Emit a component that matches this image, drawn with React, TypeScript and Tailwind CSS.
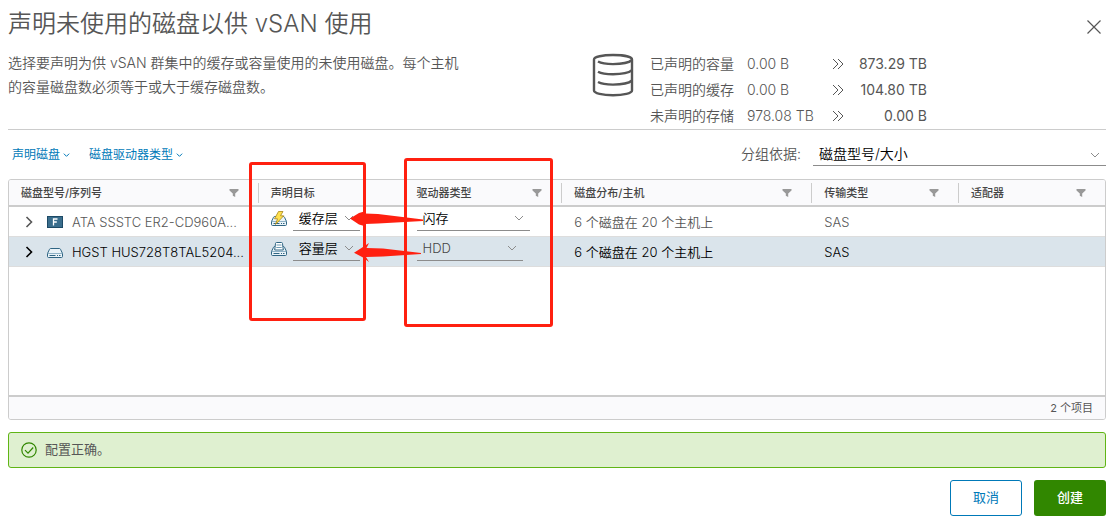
import React from "react";

const sans = "font-[Inter,'Noto_Sans_CJK_SC',sans-serif]";

function Chevron({ className = "" }: { className?: string }) {
  return (
    <svg viewBox="0 0 10 6" className={className} fill="none" stroke="currentColor" aria-hidden="true">
      <path d="M1 1l4 4 4-4" vectorEffect="non-scaling-stroke" />
    </svg>
  );
}

function FilterIcon() {
  return (
    <svg viewBox="0 0 10 8" className="h-2 w-2.5" fill="#999" aria-hidden="true">
      <path d="M.5 0h9v1.400L6.200 4.400V8L3.800 6.800V4.400L.5 1.400z" />
    </svg>
  );
}

function DatabaseIcon() {
  return (
    <svg viewBox="0 0 42 44" className="h-11 w-[42px]" fill="none" stroke="#565656" strokeWidth="2.400" aria-hidden="true">
      <path d="M2 6.500C2 3.800 10.500 2 21 2s19 1.800 19 4.500v31c0 2.700-8.500 4.800-19 4.800S2 40.200 2 37.500z" />
      <path d="M2 6.500c0 2.700 8.500 4.600 19 4.600s19-1.900 19-4.600" strokeWidth="1.200" stroke="none" />
      <path d="M6 8.500c3 1.700 8.500 2.600 15 2.600 8.500 0 16-1.500 19-4.100M6 18.700c3 1.700 8.500 2.600 15 2.600 8.500 0 16-1.500 19-4.100M6 29c3 1.700 8.500 2.600 15 2.600 8.500 0 16-1.500 19-4.100" />
    </svg>
  );
}

function FlashIcon() {
  return (
    <svg viewBox="0 0 16 12" className="h-3 w-4 shrink-0" aria-hidden="true">
      <rect x=".5" y=".5" width="15" height="11" fill="#3a6d8c" stroke="#1d4a66" />
      <path d="M6.500 9.500V3h4M6.500 6h3.300" fill="none" stroke="#fff" strokeWidth="1.300" />
    </svg>
  );
}

function DriveBody() {
  return (
    <>
      <path d="M3.600 5.500h8.800c.5 0 .9.300 1.100.8l2 4.200v3c0 .6-.4 1-1 1h-13c-.6 0-1-.4-1-1v-3l2-4.200c.2-.5.600-.8 1.100-.8z" fill="#eaf3f8" stroke="#2f6583" />
      <path d="M1 10.500h14" stroke="#8fb2c6" />
      <path d="M2.500 12.500h6M10 12.500h1M12 12.500h1.500" stroke="#2f6583" />
    </>
  );
}

function DriveIcon() {
  return (
    <svg viewBox="0 3 16 12" className="h-3 w-4 shrink-0" fill="none" aria-hidden="true">
      <DriveBody />
    </svg>
  );
}

function CacheTierIcon() {
  return (
    <svg viewBox="0 0 16 16" className="size-4 shrink-0" fill="none" aria-hidden="true">
      <DriveBody />
      <path d="M7.500.5h4.500L9.500 4.800h3.200L4.500 13.500l2-5.700H3.500z" fill="#ffe14d" stroke="#a8861a" strokeWidth=".8" />
    </svg>
  );
}

function CapacityTierIcon() {
  return (
    <svg viewBox="0 0 16 16" className="size-4 shrink-0" fill="none" aria-hidden="true">
      <DriveBody />
      <path d="M4.500 2.500c0-.6.400-1 1-1h5c.6 0 1 .4 1 1l.8 6.500H3.700z" fill="#fff" stroke="#2f6583" />
      <path d="M5.500 4h5M5.300 6.500h5.400" stroke="#6d9ab3" />
    </svg>
  );
}

function LineSelect({ label, value, width, tone }: { label: string; value: string; width: string; tone: string }) {
  return (
    <span className={`relative inline-flex h-6 border-b border-[#8c8c8c] ${width}`}>
      <select aria-label={label} defaultValue={value} className={`w-full appearance-none bg-transparent pb-px pl-1.5 text-[13px] leading-5 outline-none ${tone}`}>
        <option>{value}</option>
      </select>
      <Chevron className="pointer-events-none absolute top-2 right-1.5 h-1.5 w-2.5 text-[#8c8c8c]" />
    </span>
  );
}

const stats = [
  { label: "已声明的容量", now: "0.00 B", next: "873.29 TB" },
  { label: "已声明的缓存", now: "0.00 B", next: "104.80 TB" },
  { label: "未声明的存储", now: "978.08 TB", next: "0.00 B" },
];

const columns = [
  { name: "磁盘型号/序列号", width: "w-[22.7%]", filter: true },
  { name: "声明目标", width: "w-[13.3%]", filter: false },
  { name: "驱动器类型", width: "w-[14.4%]", filter: true },
  { name: "磁盘分布/主机", width: "w-[22.8%]", filter: true },
  { name: "传输类型", width: "w-[13.4%]", filter: true },
  { name: "适配器", width: "w-[13.4%]", filter: true },
];

const disks = [
  {
    model: "ATA SSSTC ER2-CD960A...",
    icon: <FlashIcon />,
    tierIcon: <CacheTierIcon />,
    tier: "缓存层",
    type: "闪存",
    typeWidth: "w-[113px]",
    typeTone: "text-black",
    row: "text-[#565656]",
  },
  {
    model: "HGST HUS728T8TAL5204...",
    icon: <DriveIcon />,
    tierIcon: <CapacityTierIcon />,
    tier: "容量层",
    type: "HDD",
    typeWidth: "w-[106px]",
    typeTone: "text-[#454545]",
    row: "bg-[#dae4eb] text-black",
  },
];

function DiskTable() {
  return (
    <section className="flex h-[241px] flex-col overflow-hidden rounded-[3px] border border-[#ccc]">
      <table className="w-full table-fixed border-collapse text-left">
        <thead>
          <tr className="h-[26px] border-b-2 border-[#ccc] bg-[#fafafc]">
            {columns.map((c, i) => (
              <th key={c.name} className={`p-0 text-[11px] font-medium text-[#454545] ${c.width}`}>
                <div className={`flex h-5 items-center justify-between pt-px pr-[19px] pl-3 ${i > 0 ? "border-l border-[#ccc]" : ""}`}>
                  {c.name}
                  {c.filter && (
                    <button aria-label={`筛选${c.name}`}>
                      <FilterIcon />
                    </button>
                  )}
                </div>
              </th>
            ))}
          </tr>
        </thead>
        <tbody>
          {disks.map((d) => (
            <tr key={d.model} className={`h-[30px] border-b border-[#ddd] text-[13px] leading-5 font-[350] ${d.row}`}>
              <td className="px-0 pt-0.5 pb-0">
                <div className="flex items-center pl-4">
                  <button aria-label="展开" className="mr-3.5">
                    <svg viewBox="0 0 8 12" className="h-3 w-2" fill="none" stroke="currentColor" strokeWidth="1.600" aria-hidden="true">
                      <path d="M1.500 1l5 5-5 5" />
                    </svg>
                  </button>
                  {d.icon}
                  <span className="ml-[9px] font-light whitespace-nowrap">{d.model}</span>
                </div>
              </td>
              <td className="p-0 align-top">
                <div className="flex pl-[13px]">
                  <span className="mr-1.5 pt-1">{d.tierIcon}</span>
                  <LineSelect label="声明目标" value={d.tier} width="w-[67px]" tone="text-black" />
                </div>
              </td>
              <td className="p-0 align-top">
                <div className="flex pl-[13px]">
                  <LineSelect label="驱动器类型" value={d.type} width={d.typeWidth} tone={d.typeTone} />
                </div>
              </td>
              <td className="pt-0.5 pr-0 pb-0 pl-[13px]">6 个磁盘在 20 个主机上</td>
              <td className="pt-0.5 pr-0 pb-0 pl-[13px]">SAS</td>
              <td className="p-0"></td>
            </tr>
          ))}
        </tbody>
      </table>
      <footer className="mt-auto flex h-6 items-center justify-end border-t-2 border-[#ccc] bg-[#fafafc] pr-3 text-[11px] text-[#565656]">
        2 个项目
      </footer>
    </section>
  );
}

function Annotations() {
  return (
    <div className="pointer-events-none" aria-hidden="true">
      <div className="absolute top-[162px] left-[249px] h-[159px] w-[117px] rounded-[3px] border-3 border-[#ff2010]" />
      <div className="absolute top-[158px] left-[404px] h-[169px] w-[149px] rounded-[3px] border-3 border-[#ff2010]" />
      <svg viewBox="0 0 80 56" className="absolute top-[208px] left-[346px] h-14 w-20" fill="#ff2010">
        <path d="M4 10.500L13 5l7-2-1 2.500L32 6l45 5.500V13l-45 2.500-13 .5 1 2.500-7-2z" />
        <path d="M8 44.700L17 39l6-4-2.500 5L37 40.500l38 4.500v1l-38 2.500-17 .5 3 5-6-4.500z" />
      </svg>
    </div>
  );
}

export default function App() {
  return (
    <main role="dialog" aria-labelledby="title" className={`relative bg-white px-2 pr-[9px] text-[#565656] ${sans}`}>
      <header className="flex h-[51px] items-start justify-between">
        <h1 id="title" className="pt-1 text-[24px] leading-10 font-[350]">声明未使用的磁盘以供 vSAN 使用</h1>
        <button aria-label="关闭" className="mt-[19px] mr-1">
          <svg viewBox="0 0 16 16" className="size-4" stroke="#565656" strokeWidth="1.200" aria-hidden="true">
            <path d="M1.500 1.500l13 13M14.500 1.500l-13 13" />
          </svg>
        </button>
      </header>

      <div className="grid grid-cols-[584fr_514fr] border-b border-[#ccc]">
        <p className="max-w-[460px] text-[14px] leading-6 font-[350]">
          选择要声明为供 vSAN 群集中的缓存或容量使用的未使用磁盘。每个主机的容量磁盘数必须等于或大于缓存磁盘数。
        </p>
        <div className="flex items-start">
          <span className="mt-0.5">
            <DatabaseIcon />
          </span>
          <table className="ml-4 w-[277px] table-fixed text-left text-[14px] leading-[26px]">
            <tbody>
              {stats.map((s) => (
                <tr key={s.label}>
                  <th className="w-[97px] p-0 font-[350]">{s.label}</th>
                  <td className="w-[85px] p-0 font-[350] whitespace-nowrap">{s.now}</td>
                  <td className="w-5 p-0">
                    <svg viewBox="0 0 12 12" className="size-3" fill="none" stroke="#565656" aria-hidden="true">
                      <path d="M1 1l5 5-5 5M6 1l5 5-5 5" />
                    </svg>
                  </td>
                  <td className="p-0 text-right whitespace-nowrap">{s.next}</td>
                </tr>
              ))}
            </tbody>
          </table>
        </div>
      </div>

      <div className="flex h-[49px] items-center justify-between">
        <div className="flex gap-[19px] pl-1 text-[12px] text-[#0079b8]">
          <button className="flex items-center gap-[3px]">
            声明磁盘
            <Chevron className="h-1 w-[7px]" />
          </button>
          <button className="flex items-center gap-[3px]">
            磁盘驱动器类型
            <Chevron className="h-1 w-[7px]" />
          </button>
        </div>
        <div className="flex items-center pb-0.5 text-[14px] font-[350]">
          <label htmlFor="group" className="mr-3">分组依据:</label>
          <span className="relative flex h-6 w-[293px] border-b border-[#8c8c8c]">
            <select id="group" className="w-full appearance-none bg-transparent pl-1.5 text-[14px] text-black outline-none">
              <option>磁盘型号/大小</option>
            </select>
            <Chevron className="pointer-events-none absolute top-2.5 right-1.5 h-1.5 w-2.5 text-[#8c8c8c]" />
          </span>
        </div>
      </div>

      <DiskTable />

      <div role="status" className="mt-3 flex h-9 items-center gap-2 rounded-[3px] border border-[#60b515] bg-[#dff0d0] pl-3 text-[13px]">
        <svg viewBox="0 0 16 16" className="size-4" fill="none" stroke="#318700" strokeWidth="1.200" aria-hidden="true">
          <circle cx="8" cy="8" r="7.200" />
          <path d="M4 8.200l3 3 5.200-5.700" />
        </svg>
        配置正确。
      </div>

      <div className="mt-3 flex justify-end gap-3 text-[13px]">
        <button className="h-9 w-[72px] rounded-[3px] border border-[#0079b8] text-[#0079b8]">取消</button>
        <button className="h-9 w-[72px] rounded-[3px] bg-[#318700] font-medium text-white">创建</button>
      </div>

      <Annotations />
    </main>
  );
}
